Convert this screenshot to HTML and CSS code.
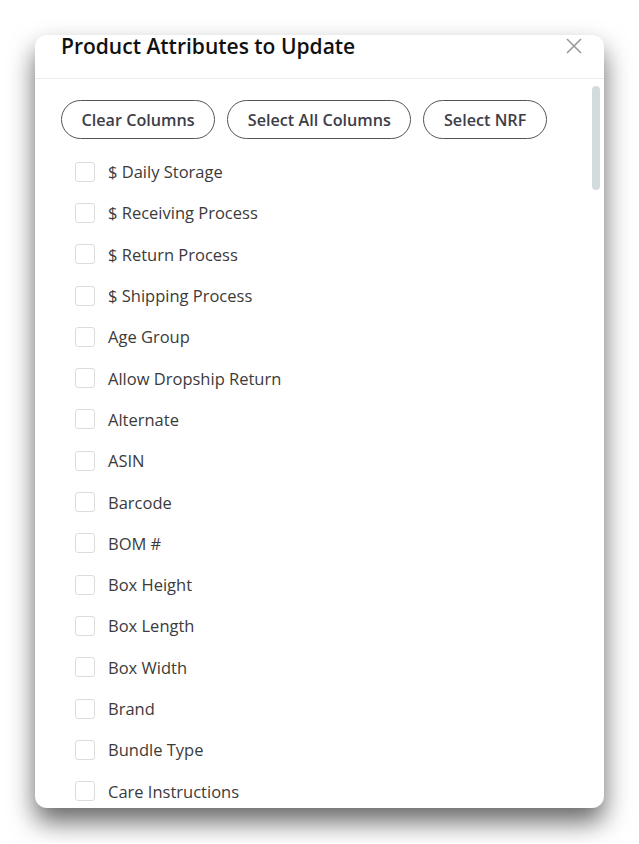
FILE: index.html
```html
<!DOCTYPE html>
<html lang="en">
<head>
  <meta charset="UTF-8">
  <title>Product Attributes to Update</title>
  <link rel="stylesheet" href="styles.css">
</head>
<body>
  <div class="modal">
    <div class="modal-header">
      <div class="title">Product Attributes to Update</div>
      <span class="close">
        <svg width="16" height="16" viewBox="0 0 16 16"><path d="M1 1 L15 15 M15 1 L1 15" stroke="#9a9a9a" stroke-width="1.6" fill="none"/></svg>
      </span>
    </div>
    <div class="modal-body">
      <div class="actions">
        <button>Clear Columns</button>
        <button>Select All Columns</button>
        <button>Select NRF</button>
      </div>
      <ul class="attr-list">
        <li><span class="box"></span>$ Daily Storage</li>
        <li><span class="box"></span>$ Receiving Process</li>
        <li><span class="box"></span>$ Return Process</li>
        <li><span class="box"></span>$ Shipping Process</li>
        <li><span class="box"></span>Age Group</li>
        <li><span class="box"></span>Allow Dropship Return</li>
        <li><span class="box"></span>Alternate</li>
        <li><span class="box"></span>ASIN</li>
        <li><span class="box"></span>Barcode</li>
        <li><span class="box"></span>BOM #</li>
        <li><span class="box"></span>Box Height</li>
        <li><span class="box"></span>Box Length</li>
        <li><span class="box"></span>Box Width</li>
        <li><span class="box"></span>Brand</li>
        <li><span class="box"></span>Bundle Type</li>
        <li><span class="box"></span>Care Instructions</li>
      </ul>
      <div class="scroll-thumb"></div>
    </div>
  </div>
</body>
</html>
```

FILE: styles.css
```css
body {
  margin: 0;
  padding: 35px;
  background: #fff;
  font-family: 'Open Sans', 'Noto Sans', sans-serif;
}
.modal {
  width: 569px;
  height: 773px;
  background: #fff;
  border-radius: 12px;
  box-shadow: 0 14px 26px rgba(0,0,0,0.6);
  overflow: hidden;
  display: flex;
  flex-direction: column;
}
.modal-header {
  height: 43px;
  border-bottom: 1px solid #ececec;
  display: flex;
  justify-content: space-between;
  align-items: flex-start;
  padding: 0 22px 0 26px;
  flex-shrink: 0;
}
.title {
  font-size: 21px;
  font-weight: 600;
  color: #111;
  line-height: 22px;
}
.close { margin-top: 2px; }
.modal-body {
  position: relative;
  flex: 1;
  overflow: hidden;
  padding: 21px 26px 0 26px;
}
.actions {
  display: flex;
  gap: 12px;
  margin-bottom: 12px;
}
.actions button {
  height: 39px;
  padding: 0 19.5px;
  border: 1px solid #555;
  border-radius: 20px;
  background: #fff;
  font-family: inherit;
  font-size: 16.2px;
  font-weight: 600;
  color: #3d3d47;
}
.attr-list {
  list-style: none;
  margin: 0;
  padding: 0 0 0 14px;
}
.attr-list li {
  height: 41.3px;
  display: flex;
  align-items: center;
  font-size: 16.5px;
  color: #3b3b3b;
}
.box {
  width: 18px;
  height: 18px;
  border: 1px solid #dcdcdc;
  border-radius: 3px;
  margin-right: 13px;
  flex-shrink: 0;
}
.scroll-thumb {
  position: absolute;
  right: 4px;
  top: 7px;
  width: 8px;
  height: 104px;
  border-radius: 4px;
  background: #d4dbde;
}
```
